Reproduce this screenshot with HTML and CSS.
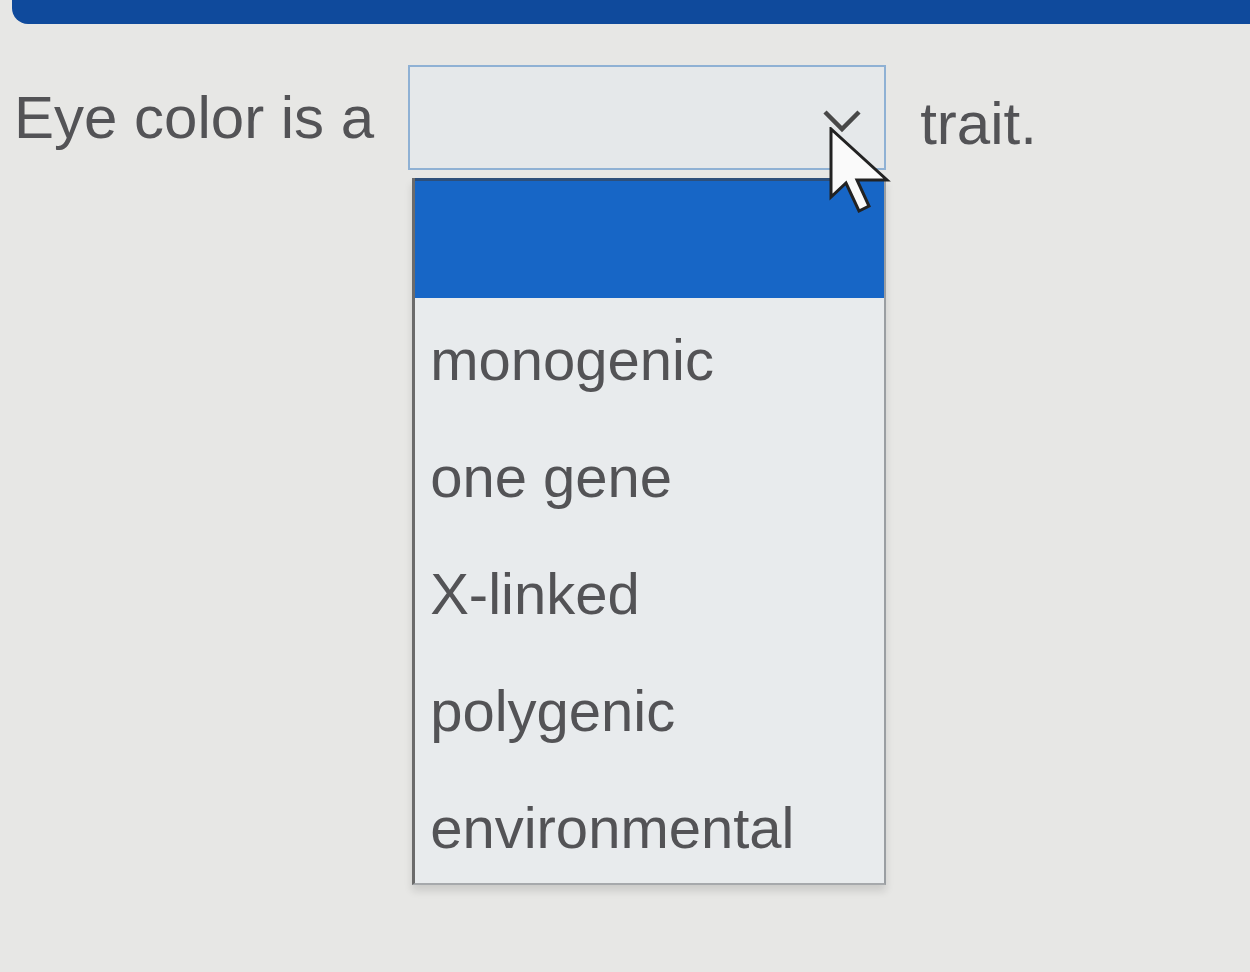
FILE: index.html
```html
<!DOCTYPE html>
<html>
<head>
<meta charset="utf-8">
<link rel="stylesheet" href="styles.css">
</head>
<body>
<div class="topbar"></div>
<div class="question">
  <span class="text lead">Eye color is a</span>
  <div class="select-wrap">
    <div class="select">
      <svg class="chevron" width="40" height="24" viewBox="0 0 40 24"><path d="M3 3 L20 20 L37 3" fill="none" stroke="#484848" stroke-width="4.5"/></svg>
    </div>
    <ul class="dropdown">
      <li class="opt selected"></li>
      <li class="opt">monogenic</li>
      <li class="opt">one gene</li>
      <li class="opt">X-linked</li>
      <li class="opt">polygenic</li>
      <li class="opt">environmental</li>
    </ul>
    <svg class="cursor" width="62" height="88" viewBox="0 0 62 88"><path d="M2 2 L2 70 L17 56 L30 84 L40 79 L28 53 L58 53 Z" fill="#fafafa" stroke="#222" stroke-width="3" stroke-linejoin="miter"/></svg>
  </div>
  <span class="text trail">trait.</span>
</div>
</body>
</html>
```
FILE: styles.css
```css
html, body {
  margin: 0;
  padding: 0;
  background: #e7e7e5;
  width: 1250px;
  height: 972px;
  overflow: hidden;
  font-family: "Liberation Sans", Arial, sans-serif;
}
.topbar {
  margin-left: 12px;
  height: 24px;
  background: #0f4a9c;
  border-bottom-left-radius: 16px;
}
.question {
  display: flex;
  align-items: center;
  margin-top: 41px;
  padding-left: 14px;
}
.text {
  font-size: 60px;
  color: #535356;
  line-height: 1;
}
.trail {
  margin-left: 34px;
  position: relative;
  top: 6px;
}
.select-wrap {
  position: relative;
  margin-left: 34px;
  width: 478px;
  height: 105px;
}
.select {
  box-sizing: border-box;
  width: 100%;
  height: 100%;
  border: 2px solid #8fb1d4;
  background: #e5e8ea;
  position: relative;
}
.chevron {
  position: absolute;
  left: 412px;
  top: 42px;
}
.dropdown {
  position: absolute;
  top: 113px;
  left: 4px;
  width: 474px;
  margin: 0;
  padding: 0;
  list-style: none;
  background: #e8ebed;
  border-left: 3px solid #6b6b6b;
  border-right: 2px solid #9a9ea2;
  border-bottom: 2px solid #a6a9ac;
  box-sizing: border-box;
  box-shadow: 0 6px 8px rgba(0,0,0,0.12);
}
.opt {
  height: 117px;
  display: flex;
  align-items: center;
  padding-left: 15px;
  font-size: 58px;
  color: #535356;
  padding-top: 6px;
  box-sizing: border-box;
}
.opt.selected {
  height: 120px;
  background: #1766c6;
  border-top: 3px solid #2d4f7a;
}
.cursor {
  position: absolute;
  left: 421px;
  top: 62px;
}
```
